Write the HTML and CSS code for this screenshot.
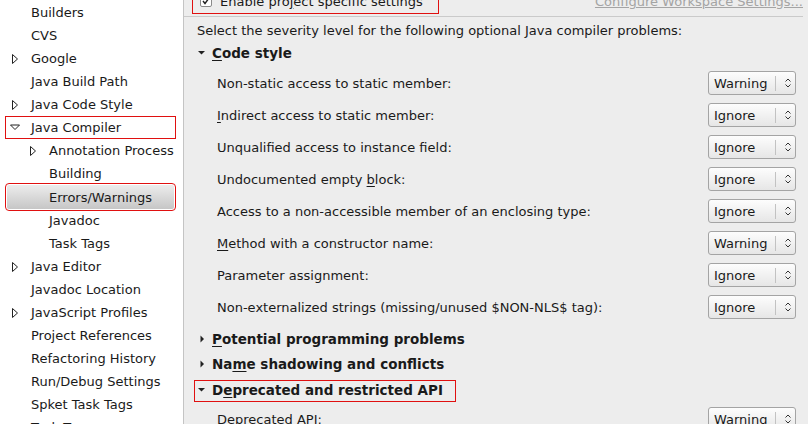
FILE: index.html
```html
<!DOCTYPE html>
<html>
<head>
<meta charset="utf-8">
<link rel="stylesheet" href="styles.css">
</head>
<body>
<div class="tree">
  <div class="row l1"><span class="tw"></span><span>Builders</span></div>
  <div class="row l1"><span class="tw"></span><span>CVS</span></div>
  <div class="row l1"><span class="tw"><svg width="12" height="12" viewBox="0 0 12 12"><path d="M2.5 1.5 L7.5 6 L2.5 10.5 Z" fill="#fff" stroke="#222" stroke-width="1"/></svg></span><span>Google</span></div>
  <div class="row l1"><span class="tw"></span><span>Java Build Path</span></div>
  <div class="row l1"><span class="tw"><svg width="12" height="12" viewBox="0 0 12 12"><path d="M2.5 1.5 L7.5 6 L2.5 10.5 Z" fill="#fff" stroke="#222" stroke-width="1"/></svg></span><span>Java Code Style</span></div>
  <div class="row l1 mark"><span class="tw"><svg width="12" height="12" viewBox="0 0 12 12"><path d="M0.5 3 L9.5 3 L5 7.5 Z" fill="#fff" stroke="#222" stroke-width="1"/></svg></span><span>Java Compiler</span></div>
  <div class="row l2"><span class="tw"><svg width="12" height="12" viewBox="0 0 12 12"><path d="M2.5 1.5 L7.5 6 L2.5 10.5 Z" fill="#fff" stroke="#222" stroke-width="1"/></svg></span><span>Annotation Process</span></div>
  <div class="row l2"><span class="tw"></span><span>Building</span></div>
  <div class="row l2 sel"><span class="tw"></span><span>Errors/Warnings</span></div>
  <div class="row l2"><span class="tw"></span><span>Javadoc</span></div>
  <div class="row l2"><span class="tw"></span><span>Task Tags</span></div>
  <div class="row l1"><span class="tw"><svg width="12" height="12" viewBox="0 0 12 12"><path d="M2.5 1.5 L7.5 6 L2.5 10.5 Z" fill="#fff" stroke="#222" stroke-width="1"/></svg></span><span>Java Editor</span></div>
  <div class="row l1"><span class="tw"></span><span>Javadoc Location</span></div>
  <div class="row l1"><span class="tw"><svg width="12" height="12" viewBox="0 0 12 12"><path d="M2.5 1.5 L7.5 6 L2.5 10.5 Z" fill="#fff" stroke="#222" stroke-width="1"/></svg></span><span>JavaScript Profiles</span></div>
  <div class="row l1"><span class="tw"></span><span>Project References</span></div>
  <div class="row l1"><span class="tw"></span><span>Refactoring History</span></div>
  <div class="row l1"><span class="tw"></span><span>Run/Debug Settings</span></div>
  <div class="row l1"><span class="tw"></span><span>Spket Task Tags</span></div>
  <div class="row l1"><span class="tw"></span><span>Task Tags</span></div>
</div>
<div class="main">
  <div class="topbar">
    <div class="enable"><span class="cb"><svg width="10" height="10" viewBox="0 0 10 10"><path d="M2 5 L4 7.5 L8 2" fill="none" stroke="#222" stroke-width="1.4"/></svg></span><span>Enable pro<u>j</u>ect specific settings</span></div>
    <span class="cfg">Configure Workspace Settings...</span>
  </div>
  <div class="sep"></div>
  <div class="intro">Select the severity level for the following optional Java compiler problems:</div>

  <div class="hdr"><div class="hbox"><span class="tri"><svg width="8" height="8" viewBox="0 0 8 8"><path d="M0 2 L7 2 L3.5 5.5 Z" fill="#222"/></svg></span><span><u>C</u>ode style</span></div></div>
  <div class="items">
    <div class="item"><span>Non-static access to static member:</span><div class="combo"><span class="val">Warning</span><span class="vsep"></span><svg width="8" height="12" viewBox="0 0 8 12"><path d="M1.5 4.5 L4 2 L6.5 4.5 M1.5 7.5 L4 10 L6.5 7.5" fill="none" stroke="#333" stroke-width="1"/></svg></div></div>
    <div class="item"><span><u>I</u>ndirect access to static member:</span><div class="combo"><span class="val">Ignore</span><span class="vsep"></span><svg width="8" height="12" viewBox="0 0 8 12"><path d="M1.5 4.5 L4 2 L6.5 4.5 M1.5 7.5 L4 10 L6.5 7.5" fill="none" stroke="#333" stroke-width="1"/></svg></div></div>
    <div class="item"><span>Unqualified access to instance field:</span><div class="combo"><span class="val">Ignore</span><span class="vsep"></span><svg width="8" height="12" viewBox="0 0 8 12"><path d="M1.5 4.5 L4 2 L6.5 4.5 M1.5 7.5 L4 10 L6.5 7.5" fill="none" stroke="#333" stroke-width="1"/></svg></div></div>
    <div class="item"><span>Undocumented empty <u>b</u>lock:</span><div class="combo"><span class="val">Ignore</span><span class="vsep"></span><svg width="8" height="12" viewBox="0 0 8 12"><path d="M1.5 4.5 L4 2 L6.5 4.5 M1.5 7.5 L4 10 L6.5 7.5" fill="none" stroke="#333" stroke-width="1"/></svg></div></div>
    <div class="item"><span>Access to a non-accessible member of an enclosing type:</span><div class="combo"><span class="val">Ignore</span><span class="vsep"></span><svg width="8" height="12" viewBox="0 0 8 12"><path d="M1.5 4.5 L4 2 L6.5 4.5 M1.5 7.5 L4 10 L6.5 7.5" fill="none" stroke="#333" stroke-width="1"/></svg></div></div>
    <div class="item"><span><u>M</u>ethod with a constructor name:</span><div class="combo"><span class="val">Warning</span><span class="vsep"></span><svg width="8" height="12" viewBox="0 0 8 12"><path d="M1.5 4.5 L4 2 L6.5 4.5 M1.5 7.5 L4 10 L6.5 7.5" fill="none" stroke="#333" stroke-width="1"/></svg></div></div>
    <div class="item"><span>Parameter assignment:</span><div class="combo"><span class="val">Ignore</span><span class="vsep"></span><svg width="8" height="12" viewBox="0 0 8 12"><path d="M1.5 4.5 L4 2 L6.5 4.5 M1.5 7.5 L4 10 L6.5 7.5" fill="none" stroke="#333" stroke-width="1"/></svg></div></div>
    <div class="item"><span>Non-externalized strings (missing/unused $NON-NLS$ tag):</span><div class="combo"><span class="val">Ignore</span><span class="vsep"></span><svg width="8" height="12" viewBox="0 0 8 12"><path d="M1.5 4.5 L4 2 L6.5 4.5 M1.5 7.5 L4 10 L6.5 7.5" fill="none" stroke="#333" stroke-width="1"/></svg></div></div>
  </div>

  <div class="hdr"><div class="hbox"><span class="tri"><svg width="8" height="8" viewBox="0 0 8 8"><path d="M2.5 0.5 L6 4 L2.5 7.5 Z" fill="#222"/></svg></span><span><u>P</u>otential programming problems</span></div></div>
  <div class="hdr"><div class="hbox"><span class="tri"><svg width="8" height="8" viewBox="0 0 8 8"><path d="M2.5 0.5 L6 4 L2.5 7.5 Z" fill="#222"/></svg></span><span>Na<u>m</u>e shadowing and conflicts</span></div></div>
  <div class="hdr marked"><div class="hbox"><span class="tri"><svg width="8" height="8" viewBox="0 0 8 8"><path d="M0 2 L7 2 L3.5 5.5 Z" fill="#222"/></svg></span><span>D<u>e</u>precated and restricted API</span></div></div>
  <div class="items">
    <div class="item"><span>Deprecated API:</span><div class="combo"><span class="val">Warning</span><span class="vsep"></span><svg width="8" height="12" viewBox="0 0 8 12"><path d="M1.5 4.5 L4 2 L6.5 4.5 M1.5 7.5 L4 10 L6.5 7.5" fill="none" stroke="#333" stroke-width="1"/></svg></div></div>
  </div>
</div>
</body>
</html>
```
FILE: styles.css
```css
html, body {
  margin: 0;
  padding: 0;
}
body {
  width: 808px;
  height: 424px;
  overflow: hidden;
  display: flex;
  align-items: flex-start;
  font-family: "DejaVu Sans", sans-serif;
  font-size: 13px;
  color: #1a1a1a;
  background: #ededed;
}
u {
  text-decoration: underline;
  text-underline-offset: 2px;
}

/* tree */
.tree {
  width: 183px;
  height: 424px;
  flex: none;
  background: #fff;
  border-right: 1px solid #c4c4c4;
  padding-top: 1px;
  overflow: hidden;
}
.row {
  height: 23px;
  display: flex;
  align-items: center;
  white-space: nowrap;
  box-sizing: border-box;
}
.row.l1 { padding-left: 8px; }
.row.l2 { padding-left: 26px; }
.tw {
  width: 23px;
  flex: none;
  display: flex;
  align-items: center;
}
.tw svg { margin-left: 2px; }
.row.mark {
  margin: 0 7px 0 5px;
  padding-left: 3px;
  outline: 1px solid #e01010;
  outline-offset: -1px;
}
.row.sel {
  margin: 0 9px 0 7px;
  padding-left: 19px;
  height: 24px;
  background: linear-gradient(#ececec, #c6c6c6);
  border-radius: 2px;
  outline: 1px solid #e01010;
  outline-offset: 1px;
}

/* main */
.main {
  flex: 1;
  min-width: 0;
  margin-top: -12px;
}
.topbar {
  height: 26px;
  display: flex;
  align-items: center;
  justify-content: space-between;
  padding: 0 5px 0 8px;
}
.enable {
  width: 247px;
  height: 26px;
  box-sizing: border-box;
  display: flex;
  align-items: center;
  padding-left: 8px;
  white-space: nowrap;
  outline: 1px solid #e01010;
  outline-offset: -1px;
}
.cb {
  width: 12px;
  height: 12px;
  flex: none;
  box-sizing: border-box;
  border: 1px solid #8a8a8a;
  border-radius: 2px;
  background: #fff;
  margin-right: 8px;
  display: flex;
  align-items: center;
  justify-content: center;
}
.cfg {
  color: #a4a4a4;
  text-decoration: underline;
  white-space: nowrap;
}
.sep {
  height: 0;
  border-top: 1px solid #cacaca;
  margin: 2px 5px 0 0;
}
.intro {
  margin-top: 5px;
  height: 18px;
  line-height: 18px;
  padding-left: 13px;
  white-space: nowrap;
}
.hdr {
  height: 25px;
  display: flex;
  align-items: center;
  padding-left: 14px;
  font-weight: bold;
  font-size: 13.5px;
  white-space: nowrap;
}
.hbox {
  display: flex;
  align-items: center;
}
.tri {
  width: 14px;
  display: flex;
  align-items: center;
}
.hdr.marked { padding-left: 10px; }
.hdr.marked .hbox {
  width: 262px;
  height: 22px;
  box-sizing: border-box;
  padding-left: 4px;
  padding-bottom: 2px;
  margin-top: 5px;
  outline: 1px solid #e01010;
  outline-offset: -1px;
}
.items {
  padding: 2px 0 3px 0;
}
.item {
  height: 32px;
  display: flex;
  align-items: center;
  justify-content: space-between;
  padding: 0 12px 0 33px;
  white-space: nowrap;
}
.combo {
  width: 88px;
  height: 24px;
  flex: none;
  box-sizing: border-box;
  border: 1px solid #a4a4a4;
  border-radius: 3px;
  background: linear-gradient(#fdfdfd, #e6e6e6);
  display: flex;
  align-items: center;
  padding-left: 5px;
}
.val {
  width: 61px;
}
.vsep {
  width: 1px;
  height: 15px;
  background: #c2c2c2;
  margin-right: 8px;
}
```
